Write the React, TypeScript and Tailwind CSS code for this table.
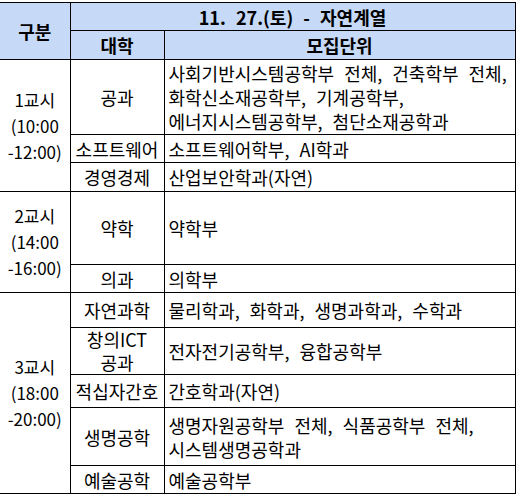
import React from "react";

interface Row {
  college: React.ReactNode;
  units: React.ReactNode;
  h: string;
}

interface Group {
  period: string;
  time: string;
  rows: Row[];
}

const groups: Group[] = [
  {
    period: "1교시",
    time: "(10:00\n-12:00)",
    rows: [
      {
        college: "공과",
        units: (
          <>
            사회기반시스템공학부 전체, 건축학부 전체,
            <br />
            화학신소재공학부, 기계공학부,
            <br />
            에너지시스템공학부, 첨단소재공학과
          </>
        ),
        h: "h-[75px]",
      },
      { college: "소프트웨어", units: "소프트웨어학부, AI학과", h: "h-[28px]" },
      { college: "경영경제", units: "산업보안학과(자연)", h: "h-[29px]" },
    ],
  },
  {
    period: "2교시",
    time: "(14:00\n-16:00)",
    rows: [
      { college: "약학", units: "약학부", h: "h-[73px]" },
      { college: "의과", units: "의학부", h: "h-[28px]" },
    ],
  },
  {
    period: "3교시",
    time: "(18:00\n-20:00)",
    rows: [
      { college: "자연과학", units: "물리학과, 화학과, 생명과학과, 수학과", h: "h-[35px]" },
      {
        college: (
          <span className="block leading-[23px]">
            창의ICT
            <br />
            공과
          </span>
        ),
        units: "전자전기공학부, 융합공학부",
        h: "h-[46px]",
      },
      { college: "적십자간호", units: "간호학과(자연)", h: "h-[33px]" },
      {
        college: "생명공학",
        units: (
          <>
            생명자원공학부 전체, 식품공학부 전체,
            <br />
            시스템생명공학과
          </>
        ),
        h: "h-[58px]",
      },
      { college: "예술공학", units: "예술공학부", h: "h-[28px]" },
    ],
  },
];

export default function App() {
  return (
    <div className="w-[517px] h-[495px] bg-white pt-[2px] font-['Noto_Sans_CJK_KR','Noto_Sans',sans-serif] text-black">
      <table className="w-[515px] table-fixed border-collapse text-[18px] leading-[24px] [word-spacing:6px]">
        <colgroup>
          <col className="w-[70px]" />
          <col className="w-[94px]" />
          <col className="w-[351px]" />
        </colgroup>
        <thead>
          <tr className="h-[28px] bg-[#c6d9f6]">
            <th
              rowSpan={2}
              className="border-t border-b border-r border-black font-bold text-[18px] text-center"
            >
              구분
            </th>
            <th colSpan={2} className="border border-black font-bold text-center">
              11. 27.(토) - 자연계열
            </th>
          </tr>
          <tr className="h-[29px] bg-[#c6d9f6]">
            <th className="border border-black font-bold text-center">대학</th>
            <th className="border border-black font-bold text-center">모집단위</th>
          </tr>
        </thead>
        <tbody>
          {groups.map((g) =>
            g.rows.map((r, i) => (
              <tr key={g.period + i} className={r.h}>
                {i === 0 && (
                  <td
                    rowSpan={g.rows.length}
                    className="border-t border-b border-r border-black text-center text-[17px] leading-[26px] whitespace-pre-line [word-spacing:0px]"
                  >
                    {g.period}
                    {"\n"}
                    {g.time}
                  </td>
                )}
                <td className="border border-black text-center whitespace-nowrap [word-spacing:0px]">
                  {r.college}
                </td>
                <td className="border border-black px-[4px] text-left whitespace-nowrap">
                  {r.units}
                </td>
              </tr>
            ))
          )}
        </tbody>
      </table>
    </div>
  );
}
